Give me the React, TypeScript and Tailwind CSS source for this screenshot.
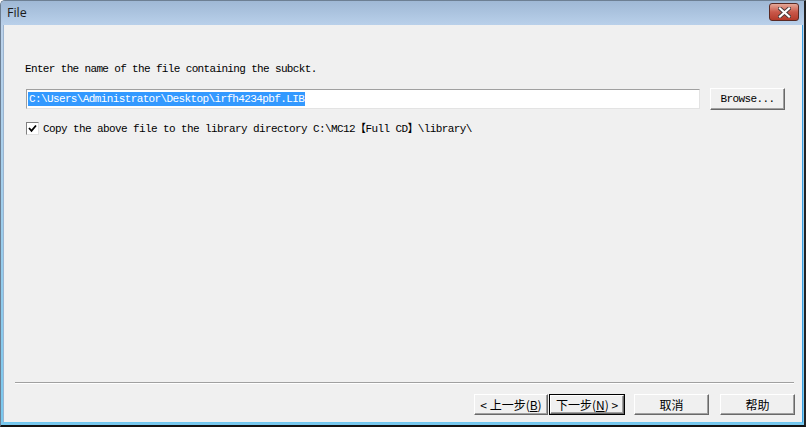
import React from 'react';

const mono = { fontFamily: '"Liberation Mono", "Noto Sans CJK SC", monospace' };
const cjk = { fontFamily: '"Noto Sans CJK SC", "Liberation Sans", sans-serif' };

function Btn({ children, def = false, className = '' }: { children: React.ReactNode; def?: boolean; className?: string }) {
  return (
    <div className={`h-[21px] ${def ? 'border border-black' : ''} ${className}`}>
      <div className="h-full w-full flex items-center justify-center bg-[#f0f0f0] border-t border-l border-white border-r border-b border-r-[#696969] border-b-[#696969] shadow-[inset_-1px_-1px_0_#a0a0a0] text-[12px] text-black leading-none">
        {children}
      </div>
    </div>
  );
}

export default function App() {
  return (
    <div className="w-[806px] h-[427px] flex flex-col bg-[#bcd2ea] border-l border-t border-[#6d7f93] border-r-2 border-b-2 border-r-[#222] border-b-[#111] rounded-tl-[5px] overflow-hidden">
      <div className="h-[24px] shrink-0 flex items-center bg-gradient-to-b from-[#9fb8d5] to-[#b9d0ea] pl-[6px] pr-[5px]">
        <span className="text-[12.5px] text-[#1b1b1b]" style={{ fontFamily: '"Open Sans", "Noto Sans", sans-serif' }}>File</span>
        <div className="ml-auto mt-[-2px] w-[30px] h-[18px] rounded-[3px] border border-[#5a2a24] bg-gradient-to-b from-[#e4a898] via-[#c9584a] to-[#b43a2a] flex items-center justify-center">
          <svg width="13" height="11" viewBox="0 0 13 11">
            <path d="M2 1.5 L11 9.5 M11 1.5 L2 9.5" stroke="#4a3a3a" strokeWidth="4" strokeLinecap="square" />
            <path d="M2 1.5 L11 9.5 M11 1.5 L2 9.5" stroke="#ffffff" strokeWidth="2.2" strokeLinecap="square" />
          </svg>
        </div>
      </div>
      <div className="flex-1 flex flex-col pl-[2px] pr-[1px] pb-[2px] bg-gradient-to-b from-[#bcd2ea] to-[#78c8ee]">
        <div className="flex-1 flex flex-col bg-[#f0f0f0] border-l border-[#9cb4cf] border-r border-r-[#3a9ee0] border-b border-b-[#6ec6ee]">
          <div className="pt-[38px] pl-[21px] text-[11px] leading-[12px] tracking-[-0.65px] text-black" style={mono}>
            Enter the name of the file containing the subckt.
          </div>
          <div className="flex items-center mt-[13px] pl-[22px]">
            <div className="w-[674px] h-[20px] bg-white border-t border-l border-[#a0a0a0] border-r border-b border-r-[#e3e3e3] border-b-[#e3e3e3] flex items-center pl-[1px]">
              <span className="bg-[#3399ff] text-white text-[11px] leading-[14px] tracking-[-0.62px] px-[1px]" style={mono}>
                C:\Users\Administrator\Desktop\irfh4234pbf.LIB
              </span>
            </div>
            <Btn className="ml-[10px] w-[75px] h-[22px]">
              <span className="text-[11px] tracking-[-0.6px] pt-[1px]" style={mono}>Browse...</span>
            </Btn>
          </div>
          <div className="flex items-center mt-[12px] pl-[22px]">
            <div className="w-[13px] h-[13px] bg-white border-t border-l border-[#808080] border-r border-b border-r-[#e0e0e0] border-b-[#e0e0e0] flex items-center justify-center">
              <svg width="9" height="9" viewBox="0 0 9 9">
                <path d="M1 4 L3.5 6.8 L8 1.5" fill="none" stroke="#000" strokeWidth="1.8" />
              </svg>
            </div>
            <span className="ml-[4px] text-[11px] leading-[12px] tracking-[-0.6px] text-black" style={mono}>
              Copy the above file to the library directory C:\MC12【Full CD】\library\
            </span>
          </div>
          <div className="flex-1" />
          <div className="ml-[11px] mr-[8px] h-[2px] border-t border-[#a0a0a0] border-b border-b-white" />
          <div className="flex items-center justify-end mt-[10px] mb-[7px] pr-[7px]" style={cjk}>
            <Btn className="w-[74px]">
              <span>&lt; 上一步(<u>B</u>)</span>
            </Btn>
            <Btn def className="w-[76px] ml-[1px]">
              <span>下一步(<u>N</u>) &gt;</span>
            </Btn>
            <Btn className="w-[75px] ml-[9px]">
              <span>取消</span>
            </Btn>
            <Btn className="w-[75px] ml-[11px]">
              <span>帮助</span>
            </Btn>
          </div>
        </div>
      </div>
    </div>
  );
}
